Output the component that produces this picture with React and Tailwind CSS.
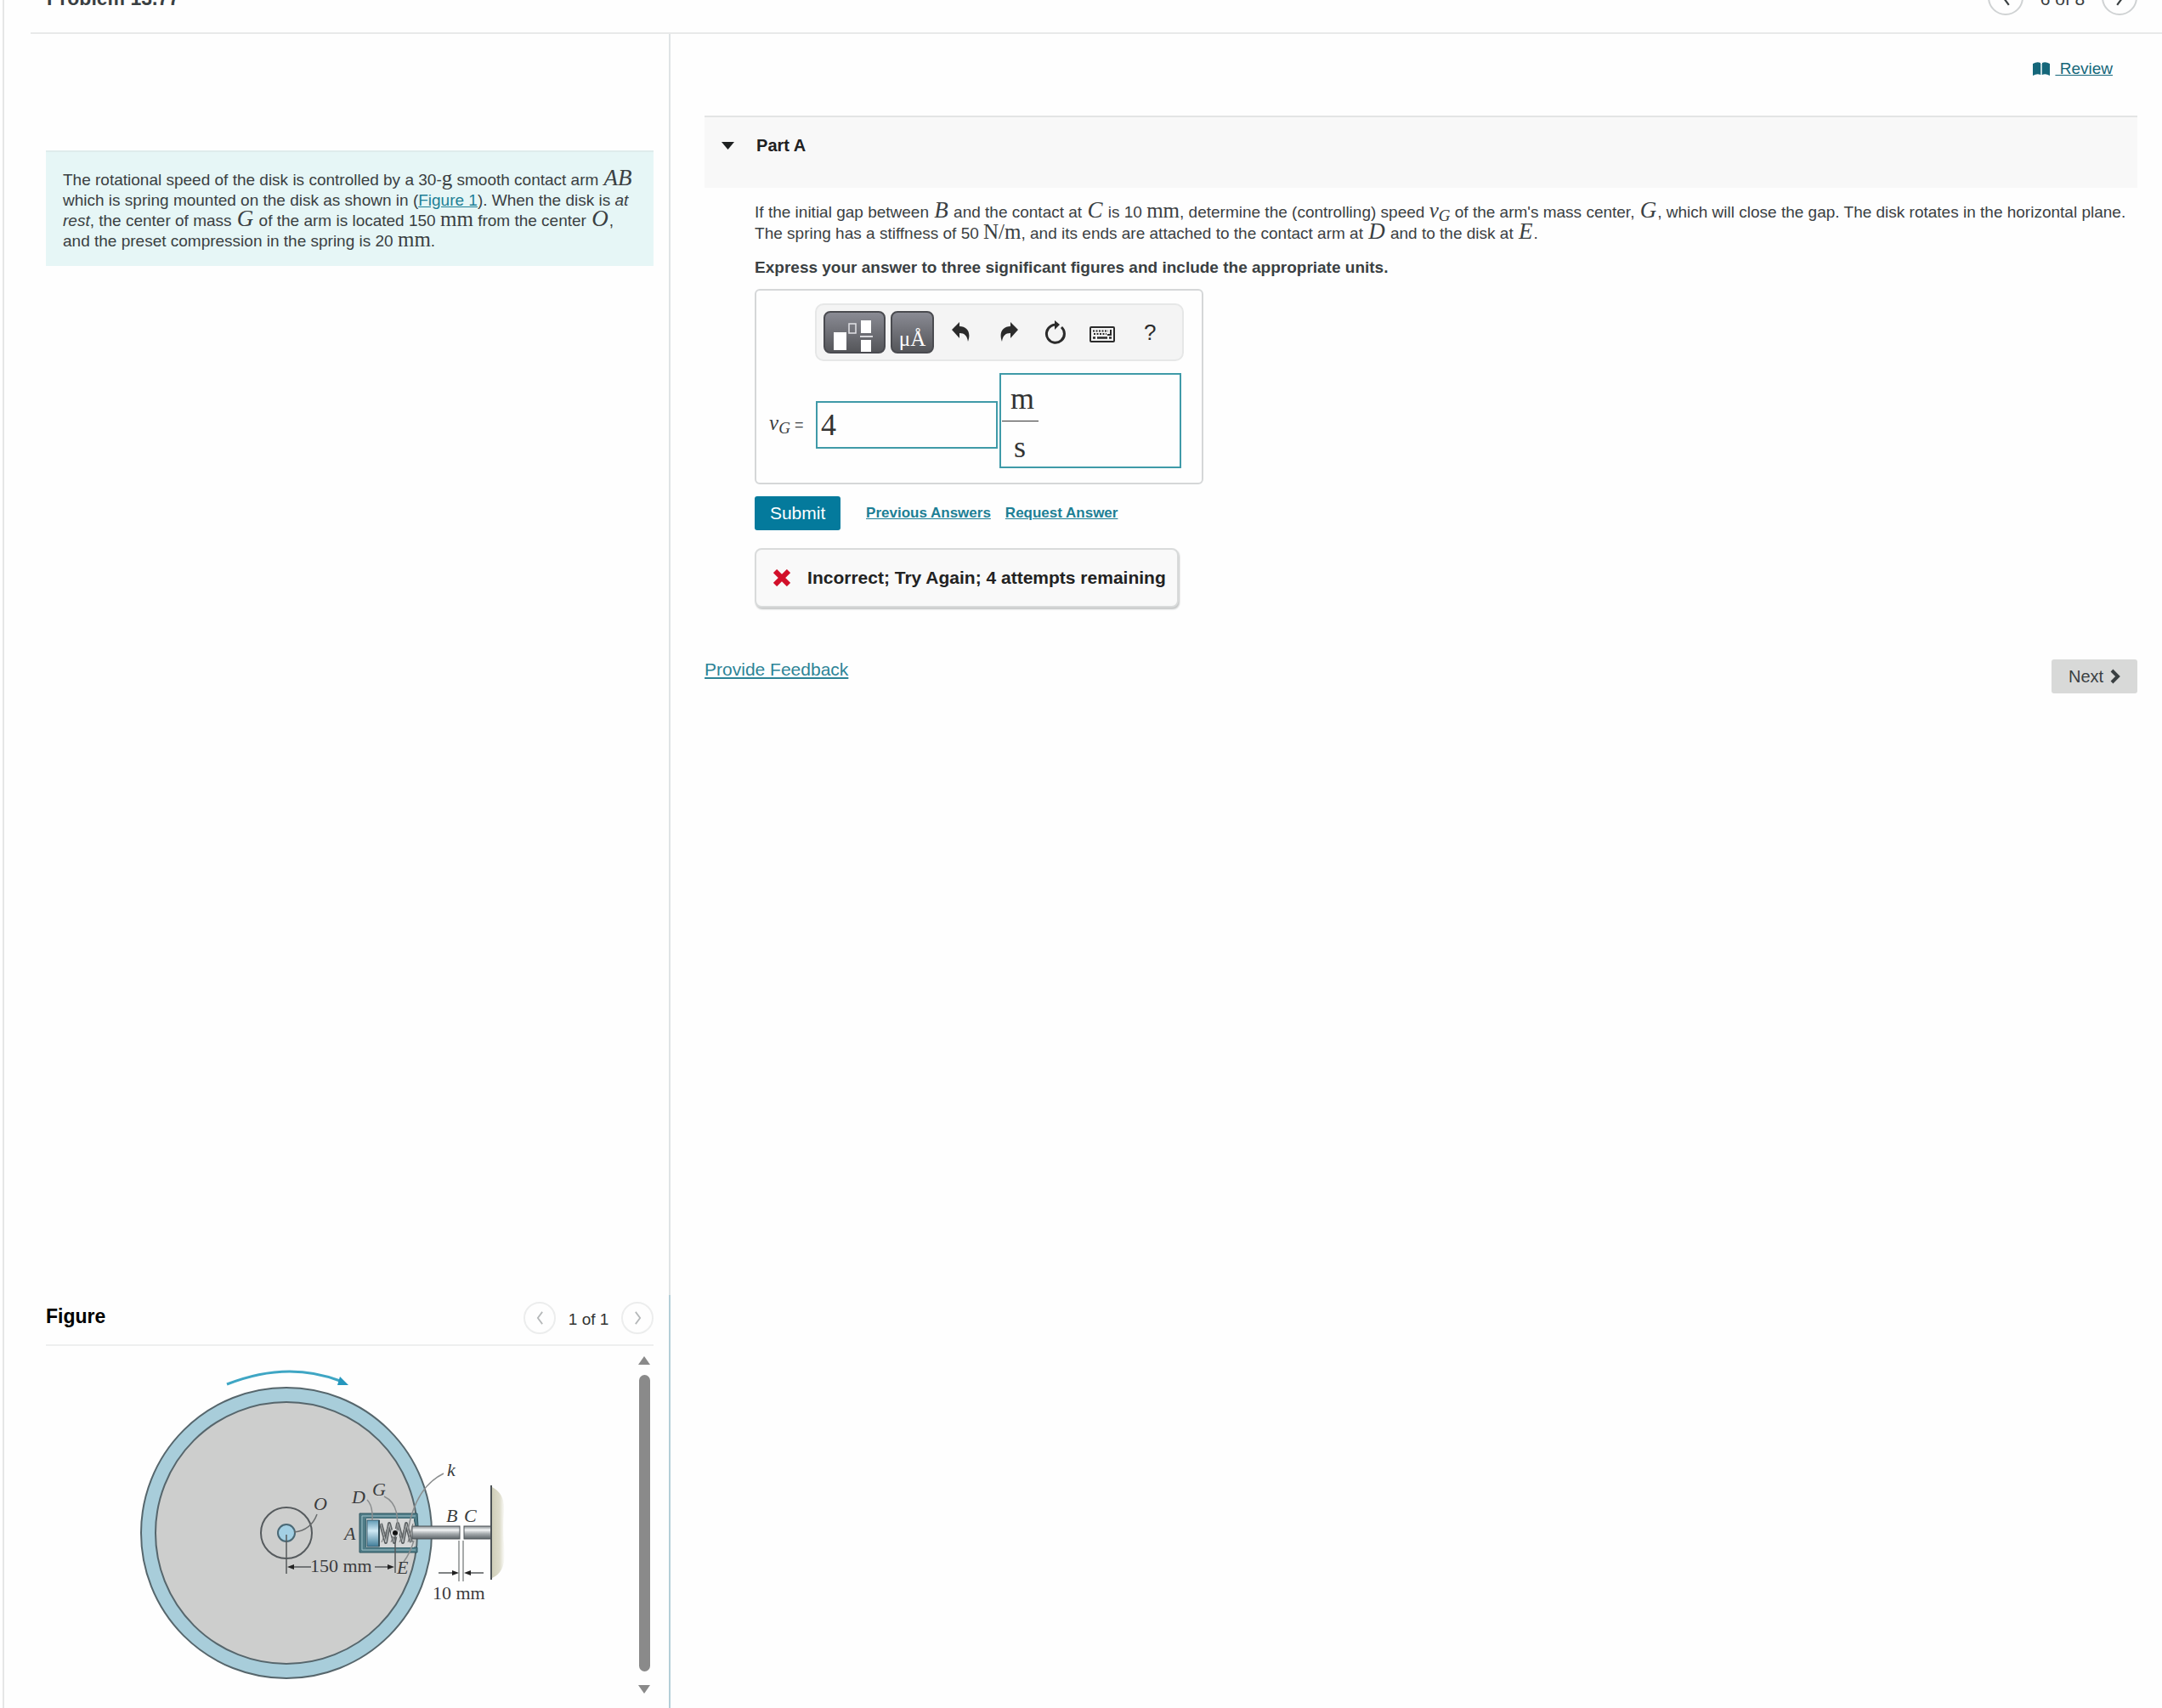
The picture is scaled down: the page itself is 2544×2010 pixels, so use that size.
// Inline math: serif letters, slightly larger than the text around them
const Var = ({ children }) => (
  <i className="mx-px font-['Liberation_Serif',serif] text-[27px] leading-[0]">{children}</i>
);

const Unit = ({ children }) => (
  <span className="font-['Liberation_Serif',serif] text-[25px] leading-[0]">{children}</span>
);

const SpeedVar = () => (
  <i className="font-['Liberation_Serif',serif] text-[25px] leading-[0]">
    v<sub className="text-[19px] leading-[0] bottom-[-4px]">G</sub>
  </i>
);

const Chevron = ({ flip, className }) => (
  <svg viewBox="0 0 10 18" className={className} fill="none" stroke="currentColor" strokeWidth="2">
    <path d={flip ? 'M8 1 L2 9 L8 17' : 'M2 1 L8 9 L2 17'} />
  </svg>
);

function Header() {
  return (
    <header className="-mt-6 ml-[31px] pl-[19px] pr-[29px] h-16 flex items-start justify-between border-b-2 border-[#e8e9e9]">
      <h1 className="mt-2 text-[23px] leading-7 font-bold">Problem 13.77</h1>
      <nav aria-label="Problems" className="flex items-center">
        <button aria-label="Previous problem" className="size-[42px] rounded-full border-2 border-[#cfd2d3] flex items-center justify-center">
          <Chevron flip className="w-[11px] h-5" />
        </button>
        <span className="w-[92px] text-center text-[21px] leading-6 mt-1">6 of 8</span>
        <button aria-label="Next problem" className="size-[42px] rounded-full border-2 border-[#cfd2d3] flex items-center justify-center">
          <Chevron className="w-[11px] h-5" />
        </button>
      </nav>
    </header>
  );
}

function DiskFigure() {
  return (
    <svg
      viewBox="140 1590 480 420"
      className="w-[480px] h-[420px] font-['Liberation_Serif',serif]"
      fontSize="22"
      role="img"
      aria-label="Rotating disk with a spring mounted contact arm"
    >
      <defs>
        <linearGradient id="rod" x1="0" y1="0" x2="0" y2="1">
          <stop offset="0" stopColor="#8b9195" />
          <stop offset="0.3" stopColor="#f2f4f5" />
          <stop offset="0.6" stopColor="#a4a9ac" />
          <stop offset="1" stopColor="#5f666a" />
        </linearGradient>
        <linearGradient id="piston" x1="0" y1="0" x2="0" y2="1">
          <stop offset="0" stopColor="#5f9ab5" />
          <stop offset="0.4" stopColor="#cfe9f4" />
          <stop offset="1" stopColor="#3f7c98" />
        </linearGradient>
        <linearGradient id="wall" x1="0" y1="0" x2="1" y2="0">
          <stop offset="0" stopColor="#cfceb8" />
          <stop offset="0.6" stopColor="#dddccb" />
          <stop offset="1" stopColor="#ffffff" />
        </linearGradient>
      </defs>

      {/* rotation direction */}
      <path d="M266 1629 Q337 1601 399 1625" fill="none" stroke="#3fa6c4" strokeWidth="3" />
      <path d="M409 1630 L396 1630 L399 1620 Z" fill="#2596bd" />

      {/* disk */}
      <circle cx="336" cy="1804" r="171" fill="#a8cdda" stroke="#56666c" strokeWidth="2" />
      <circle cx="336" cy="1804" r="154" fill="#cdcecd" stroke="#56666c" strokeWidth="2" />
      <circle cx="336" cy="1804" r="30" fill="none" stroke="#565b5e" strokeWidth="2" />
      <circle cx="336" cy="1804" r="10" fill="#a3d0e4" stroke="#4a6875" strokeWidth="2" />

      {/* housing */}
      <path d="M490 1781 H422 V1827 H490 V1821 H430 V1787 H486 L488 1796 H491 Z" fill="#4f7c87" stroke="#2f5761" strokeWidth="1" />
      <path d="M488 1784 H425 V1824 H488" fill="none" stroke="#9fc0c8" strokeWidth="1" />
      <path d="M430 1787 H486 V1821 H430 Z" fill="#d6d8d8" />
      <rect x="431" y="1789" width="14" height="31" fill="url(#piston)" stroke="#3a5f6e" strokeWidth="1" />
      <path d="M445 1789 V1820" stroke="#33505b" strokeWidth="2" />

      {/* rods */}
      <rect x="484" y="1796" width="56" height="15" fill="url(#rod)" stroke="#4d5356" strokeWidth="1" />
      <rect x="545" y="1796" width="32" height="15" fill="url(#rod)" stroke="#4d5356" strokeWidth="1" />

      {/* spring */}
      <path
        d="M447 1793 L453 1815 L457 1793 L463 1815 L467 1793 L473 1815 L477 1793 L483 1815"
        fill="none" stroke="#5a5f61" strokeWidth="4" strokeLinejoin="round"
      />
      <path
        d="M447 1793 L453 1815 L457 1793 L463 1815 L467 1793 L473 1815 L477 1793 L483 1815"
        fill="none" stroke="#b9bdbe" strokeWidth="1" strokeLinejoin="round"
      />
      <path d="M448 1815 L457 1793 M459 1815 L467 1793 M469 1815 L477 1793 M479 1815 L485 1793" stroke="#77797a" strokeWidth="1" />
      <circle cx="464" cy="1804" r="5" fill="#d6d8d8" />
      <circle cx="464" cy="1804" r="3" fill="#111" />

      {/* wall */}
      <path d="M578 1750 Q594 1758 592 1780 Q590 1805 593 1825 Q594 1850 578 1857 Z" fill="url(#wall)" />
      <path d="M577 1748 V1859" stroke="#4d5356" strokeWidth="2" />

      {/* leaders */}
      <g fill="none" stroke="#8b8e8f" strokeWidth="1.5">
        <path d="M345 1803 Q365 1801 372 1782" stroke="#6a6d6e" />
        <path d="M431 1765 Q438 1772 437 1789" />
        <path d="M451 1761 Q470 1770 466 1802" />
        <path d="M521 1734 Q488 1750 479 1801" />
        <path d="M474 1838 Q482 1827 486 1813" />
      </g>

      {/* dimensions */}
      <g stroke="#55595b" strokeWidth="1.5">
        <path d="M336 1806 V1852 M464 1806 V1851" />
        <path d="M344 1844 H365 M440 1844 H458" />
        <path d="M539 1813 V1861 M544 1813 V1861" stroke="#8b8e8f" />
        <path d="M515 1851 H534 M550 1851 H568" />
      </g>
      <path d="M337 1844 L345 1841 V1847 Z M463 1844 L455 1841 V1847 Z M539 1851 L531 1848 V1854 Z M545 1851 L553 1848 V1854 Z" fill="#222" />

      <g fill="#3a3c3d">
        <g fontStyle="italic">
          <text x="368" y="1777">O</text>
          <text x="413" y="1769">D</text>
          <text x="437" y="1760">G</text>
          <text x="525" y="1737">k</text>
          <text x="404" y="1812">A</text>
          <text x="524" y="1791">B</text>
          <text x="545" y="1791">C</text>
          <text x="466" y="1852">E</text>
        </g>
        <text x="364" y="1850">150 mm</text>
        <text x="508" y="1882">10 mm</text>
      </g>
    </svg>
  );
}

function ProblemColumn() {
  return (
    <aside className="w-[calc(31%-3px)] shrink-0 flex flex-col">
      <div className="grow pl-[49px] pr-[18px] pt-[137px] border-r-2 border-[#dfe3e5]">
        <p className="px-5 pt-[21px] pb-[17px] border-t-2 border-[#dfecec] bg-[#e6f6f6] text-[19px] leading-6 whitespace-nowrap">
          The rotational speed of the disk is controlled by a 30-<Unit>g</Unit> smooth contact arm <Var>AB</Var><br />
          which is spring mounted on the disk as shown in (<a href="#figure" className="text-[#1d7f95] underline">Figure 1</a>). When the disk is <i>at</i><br />
          <i>rest</i>, the center of mass <Var>G</Var> of the arm is located 150 <Unit>mm</Unit> from the center <Var>O</Var>,<br />
          and the preset compression in the spring is 20 <Unit>mm</Unit>.
        </p>
      </div>

      <section id="figure" className="pl-[49px] pr-[18px] border-r-2 border-[#b4ced8]">
        <div className="h-[60px] flex items-center justify-between border-b-2 border-[#eeefef]">
          <h2 className="pb-2 text-[23px] leading-7 font-bold text-black">Figure</h2>
          <nav aria-label="Figures" className="pb-1 flex items-center text-[#333]">
            <button aria-label="Previous figure" className="size-[38px] rounded-full border-2 border-[#eceded] text-[#b5b8b9] flex items-center justify-center">
              <Chevron flip className="w-[9px] h-4" />
            </button>
            <span className="w-[77px] text-center text-[19px] leading-6 mt-1">1 of 1</span>
            <button aria-label="Next figure" className="size-[38px] rounded-full border-2 border-[#eceded] text-[#b5b8b9] flex items-center justify-center">
              <Chevron className="w-[9px] h-4" />
            </button>
          </nav>
        </div>
        <div className="flex justify-between pl-[87px] pr-1">
          <div className="pt-1.5">
            <DiskFigure />
          </div>
          <div className="w-[14px] pt-3 pb-[17px] flex flex-col items-center gap-3">
            <svg viewBox="0 0 14 10" className="w-[14px] h-[10px]"><path d="M7 0 L14 10 H0 Z" fill="#8a8a8a" /></svg>
            <div className="w-[13px] mb-1 grow rounded-full bg-[#8a8a8a]" />
            <svg viewBox="0 0 14 10" className="w-[14px] h-[10px]"><path d="M7 10 L14 0 H0 Z" fill="#8a8a8a" /></svg>
          </div>
        </div>
      </section>
    </aside>
  );
}

function Toolbar() {
  const dark = 'h-[50px] rounded-lg border-2 border-[#4a4b50] bg-linear-to-b from-[#8a8b94] to-[#55565a] text-white flex items-center justify-center';
  return (
    <div className="ml-[69px] w-[434px] h-[68px] pl-2 flex items-center rounded-[10px] border-2 border-[#e6e7e7] bg-[#f4f4f4] text-[#2b2b2b]">
      <button aria-label="Templates" className={`${dark} w-[73px]`}>
        <svg viewBox="0 0 69 46" className="w-[69px] h-[46px]">
          <path d="M10 23 H25 V44 H10 Z M42 9 H54 V24 H42 Z M42 32 H54 V46 H42 Z" fill="#fff" />
          <path d="M41 28 H56" stroke="#d8d8dc" strokeWidth="2" />
          <rect x="28" y="13" width="8" height="11" fill="none" stroke="#e2e2e6" strokeWidth="1.5" />
        </svg>
      </button>
      <button aria-label="Units" className={`${dark} w-[51px] ml-1.5 pt-4 font-['Liberation_Serif',serif] text-[25px]`}>μÅ</button>
      <button aria-label="Undo" className="ml-[21px] w-6 h-8 flex items-center">
        <svg viewBox="0 0 22 24" className="w-[22px] h-6" fill="currentColor"><path d="M9 0 V5 C18 5 23 12 19 23 C18 16 15 13 9 13 V19 L0 9 Z" /></svg>
      </button>
      <button aria-label="Redo" className="ml-8 w-6 h-8 flex items-center">
        <svg viewBox="0 0 22 24" className="w-[22px] h-6" fill="currentColor"><path d="M13 0 V5 C4 5 -1 12 3 23 C4 16 7 13 13 13 V19 L22 9 Z" /></svg>
      </button>
      <button aria-label="Reset" className="ml-[29px] w-[26px] h-8 flex items-center">
        <svg viewBox="0 0 26 28" className="w-[26px] h-7">
          <path d="M20 8 A10.5 10.5 0 1 1 8 6.5 Q10 5 14 5" fill="none" stroke="currentColor" strokeWidth="3" />
          <path d="M12 0 L18 5 L12 11 Z" fill="currentColor" />
        </svg>
      </button>
      <button aria-label="Keyboard" className="ml-[27px] mt-1 w-[30px] h-8 flex items-center">
        <svg viewBox="0 0 30 19" className="w-[30px] h-[19px]" fill="none" stroke="currentColor">
          <rect x="1" y="1" width="28" height="17" rx="1" strokeWidth="2" />
          <path d="M4 5.5 H22 M5 9 H20" strokeWidth="2" strokeDasharray="2 1.5" />
          <path d="M25 4 V10 H21" strokeWidth="2" />
          <path d="M4 13.5 H7 M9 13.5 H21 M23 13.5 H26" strokeWidth="2.5" />
        </svg>
      </button>
      <button aria-label="Help" className="ml-[34px] text-[26px] leading-8">?</button>
    </div>
  );
}

function AnswerBox() {
  const field = "font-['Liberation_Serif',serif] text-[#333] outline-none";
  return (
    <div className="mt-[13px] w-[528px] pt-[15px] pb-[17px] rounded-md border-2 border-[#d5d7d8]">
      <Toolbar />
      <div className="mt-3.5 pl-[15px] flex items-center">
        <div className="pt-2.5 flex items-center">
          <label htmlFor="speed" className="w-[55px] text-[18px]"><SpeedVar /> =</label>
          <input id="speed" defaultValue="4" className={`${field} w-[214px] h-[56px] px-1 text-[36px] border-2 border-[#3f9aa8]`} />
        </div>
        <div role="group" aria-label="Units" className="ml-[2px] w-[214px] h-[112px] border-2 border-[#3f9aa8] flex flex-col justify-center">
          <input aria-label="Unit numerator" defaultValue="m" className={`${field} w-[44px] h-[54px] pl-[11px] pt-0.5 text-[36px]`} />
          <div className="ml-px w-[43px] h-px bg-[#333]" />
          <input aria-label="Unit denominator" defaultValue="s" className={`${field} w-[44px] h-[53px] pl-[15px] pt-1.5 text-[36px]`} />
        </div>
      </div>
    </div>
  );
}

function PartColumn() {
  return (
    <main className="grow min-w-0 pl-10 pr-[29px]">
      <div className="h-24 pr-[29px] pt-[29px] flex justify-end">
        <a href="#review" className="flex items-center gap-1.5 h-6 text-[19px] leading-6 text-[#15677a]">
          <svg viewBox="0 0 20 16" className="w-5 h-4">
            <path d="M0 2 Q5 -1 9 1 V15 Q5 13 0 16 Z M11 1 Q15 -1 20 2 V16 Q15 13 11 15 Z" fill="currentColor" />
            <path d="M10 2 V15" stroke="#7fb3bd" strokeWidth="1" />
          </svg>
          <span className="underline whitespace-pre"> Review</span>
        </a>
      </div>

      <div className="h-[85px] pl-5 pt-[19px] border-t-2 border-[#e3e5e5] bg-[#f8f8f8]">
        <button className="flex items-center gap-[26px] text-[20px] leading-7 font-bold text-[#1f2122]">
          <svg viewBox="0 0 15 9" className="w-[15px] h-[9px]"><path d="M0 0 H15 L7.5 9 Z" fill="currentColor" /></svg>
          Part A
        </button>
      </div>

      <div className="pl-[59px] pt-4">
        <p className="text-[19px] leading-[25px]">
          If the initial gap between <Var>B</Var> and the contact at <Var>C</Var> is 10 <Unit>mm</Unit>, determine the (controlling) speed <SpeedVar /> of the arm's mass center, <Var>G</Var>, which will close the gap. The disk rotates in the horizontal plane.<br />
          The spring has a stiffness of 50 <Unit>N/m</Unit>, and its ends are attached to the contact arm at <Var>D</Var> and to the disk at <Var>E</Var>.
        </p>
        <p className="mt-4 text-[19px] leading-6 font-bold">
          Express your answer to three significant figures and include the appropriate units.
        </p>

        <AnswerBox />

        <div className="mt-3.5 flex items-center">
          <button className="w-[101px] h-10 rounded-[3px] bg-[#047a9c] text-white text-[21px]">Submit</button>
          <a href="#previous" className="ml-[30px] text-[17px] font-bold text-[#1d7f95] underline">Previous Answers</a>
          <a href="#request" className="ml-[17px] text-[17px] font-bold text-[#1d7f95] underline">Request Answer</a>
        </div>

        <div className="mt-[21px] w-[499px] h-[70px] pl-5 flex items-center gap-5 rounded-lg border-2 border-[#d9dbdb] bg-[#f9f9f9] shadow-[1px_2px_2px_#c4c6c6] text-[21px] font-bold text-[#222] whitespace-nowrap">
          <svg viewBox="0 0 20 20" className="size-5 text-[#d2102a]" fill="none" stroke="currentColor" strokeWidth="6">
            <path d="M2 2 L18 18 M18 2 L2 18" />
          </svg>
          Incorrect; Try Again; 4 attempts remaining
        </div>
      </div>

      <div className="mt-[61px] flex items-start justify-between">
        <a href="#feedback" className="text-[21px] leading-6 text-[#2d8497] underline">Provide Feedback</a>
        <button className="w-[101px] h-10 rounded-[3px] bg-[#d8d9d8] text-[20px] flex items-center justify-center gap-2">
          Next
          <svg viewBox="0 0 12 18" className="w-3 h-[18px]" fill="none" stroke="currentColor" strokeWidth="4">
            <path d="M2 2 L9 9 L2 16" />
          </svg>
        </button>
      </div>
    </main>
  );
}

export default function App() {
  return (
    <div className="min-h-screen overflow-hidden flex flex-col ml-[3px] border-l-2 border-[#e6e7e7] bg-[#fefefe] text-[#3a4042] font-['Liberation_Sans',Arial,sans-serif]">
      <Header />
      <div className="grow flex">
        <ProblemColumn />
        <PartColumn />
      </div>
    </div>
  );
}
